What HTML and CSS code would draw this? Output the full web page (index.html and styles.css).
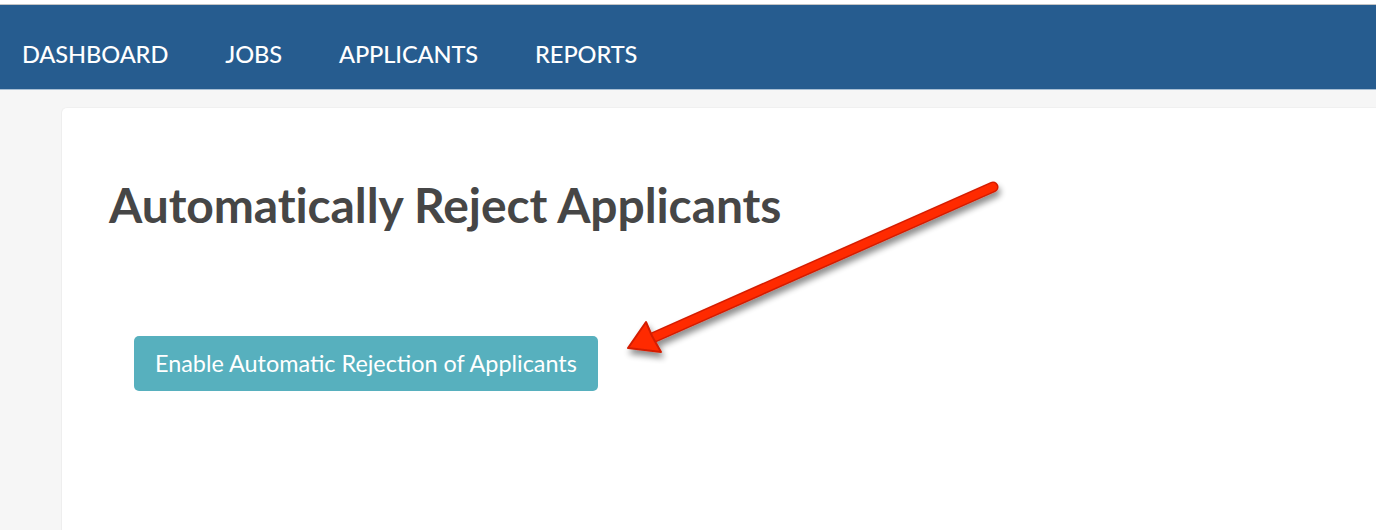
FILE: index.html
```html
<!DOCTYPE html>
<html lang="en">
<head>
<meta charset="utf-8">
<title>Automatically Reject Applicants</title>
<link rel="stylesheet" href="styles.css">
</head>
<body>
<header class="topbar">
  <nav class="mainnav">
    <a class="navlink" href="#">DASHBOARD</a>
    <a class="navlink" href="#">JOBS</a>
    <a class="navlink" href="#">APPLICANTS</a>
    <a class="navlink" href="#">REPORTS</a>
  </nav>
</header>
<main class="page">
  <section class="card">
    <h1 class="title">Automatically Reject Applicants</h1>
    <div class="actions">
      <button class="btn-enable" type="button">Enable Automatic Rejection of Applicants</button>
    </div>
  </section>
</main>
<svg class="callout" width="1376" height="530" viewBox="0 0 1376 530" aria-hidden="true">
  <defs>
    <filter id="drop" x="-20%" y="-20%" width="140%" height="140%">
      <feGaussianBlur in="SourceAlpha" stdDeviation="3"/>
      <feOffset dx="2" dy="5" result="b"/>
      <feComponentTransfer><feFuncA type="linear" slope="0.45"/></feComponentTransfer>
      <feMerge><feMergeNode/><feMergeNode in="SourceGraphic"/></feMerge>
    </filter>
  </defs>
  <g filter="url(#drop)">
    <line x1="993" y1="187" x2="650" y2="339" stroke="#d41d00" stroke-width="11" stroke-linecap="round"/>
    <line x1="993" y1="187" x2="650" y2="339" stroke="#ff2a00" stroke-width="8" stroke-linecap="round"/>
    <path d="M628 348 L646 322 L652 336 L661 352 Z" fill="#ff2a00" stroke="#d41d00" stroke-width="2" stroke-linejoin="round"/>
  </g>
</svg>
</body>
</html>
```

FILE: styles.css
```css
html, body {
  margin: 0;
  padding: 0;
  height: 100%;
}

body {
  background: #f6f6f6;
  font-family: Lato, "Open Sans", "Liberation Sans", sans-serif;
  overflow: hidden;
  display: flex;
  flex-direction: column;
}

.topbar {
  background: #ffffff;
  padding-top: 4px;
}

.mainnav {
  display: flex;
  align-items: center;
  height: 84px;
  padding-left: 22px;
  gap: 57px;
  background: #265c8f;
  border-top: 1px solid #c4c4c4;
  border-bottom: 1px solid #a8bfd4;
}

.navlink {
  color: #ffffff;
  text-decoration: none;
  font-size: 23.6px;
  font-weight: 500;
  letter-spacing: -0.1px;
  padding-top: 14px;
}

.page {
  flex: 1;
  padding: 17px 0 0 61px;
  display: flex;
}

.card {
  flex: 1;
  background: #ffffff;
  border-top-left-radius: 6px;
  border-left: 1px solid #eeeeee;
  border-top: 1px solid #f0f0f0;
  padding: 68px 0 0 47px;
}

.title {
  margin: 0;
  font-size: 48px;
  font-weight: 700;
  color: #464646;
  letter-spacing: -0.1px;
  line-height: 1.2;
}

.actions {
  padding: 102px 0 0 25px;
}

.btn-enable {
  font-family: inherit;
  font-size: 23.4px;
  font-weight: 400;
  color: #ffffff;
  background: #57b0be;
  border: none;
  border-radius: 5px;
  height: 55px;
  padding: 0 21px;
  cursor: pointer;
}

.callout {
  position: absolute;
  left: 0;
  top: 0;
  pointer-events: none;
}
```
